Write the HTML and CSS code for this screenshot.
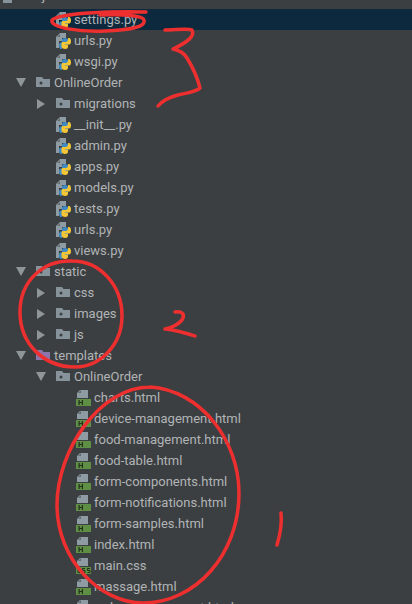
FILE: index.html
```html
<!DOCTYPE html>
<html lang="en">
<head>
<meta charset="utf-8">
<title>Project</title>
<link rel="stylesheet" href="styles.css">
</head>
<body>
<svg class="defs" width="0" height="0" aria-hidden="true">
  <symbol id="py" viewBox="0 0 16 16">
    <path fill="#8f9ba3" d="M4 0h6v5H6v3H3v7H0V4z"/>
    <path fill="#3c3f41" d="M4 1v3H1.200z" opacity=".55"/>
    <path fill="#3f8ac2" d="M9 5C6.500 5 6 6 6 7.500V9h3v.6H4.800C3.500 9.600 3 11 3 12.500S3.500 16 5 16h1v-1.800C6 13 7 12 8 12h3c1 0 1.500-.7 1.500-1.500v-3C12.500 6 11 5 9 5z"/>
    <path fill="#f4c534" transform="rotate(180 9 10.500)" d="M9 5C6.500 5 6 6 6 7.500V9h3v.6H4.800C3.500 9.600 3 11 3 12.500S3.500 16 5 16h1v-1.800C6 13 7 12 8 12h3c1 0 1.500-.7 1.500-1.500v-3C12.500 6 11 5 9 5z"/>
  </symbol>
  <symbol id="folder" viewBox="0 0 16 16">
    <path fill="#87939a" d="M0 2h6l1.500 2H14v8H0z"/>
    <circle cx="5" cy="8" r="1.500" fill="#3c3f41"/>
  </symbol>
  <symbol id="folder-purple" viewBox="0 0 16 16">
    <path fill="#8a74ab" d="M0 2h6l1.500 2H14v8H0z"/>
  </symbol>
  <symbol id="html" viewBox="0 0 16 16">
    <path fill="#8f9ba3" d="M5 -1h7v9H1V3z"/>
    <path fill="#3c3f41" d="M5 0v3H2z" opacity=".55"/>
    <path fill="#5f8f45" d="M0 9h15v7H0z"/>
    <path fill="#22301c" d="M2.500 10h1.200v2h2.100v-2H7v5H5.800v-2H3.700v2H2.500z"/>
  </symbol>
  <symbol id="css" viewBox="0 0 16 16">
    <path fill="#8f9ba3" d="M5 -1h7v9H1V3z"/>
    <path fill="#3c3f41" d="M5 0v3H2z" opacity=".55"/>
    <path fill="#5f8f45" d="M0 9h15v7H0z"/>
    <path fill="none" stroke="#22301c" d="M5 10.500H2v4h3M9 10.500H6.500v2H9v2H6.500M14 10.500h-2.500v2H14v2h-2.500"/>
  </symbol>
</svg>

<main class="panel">
  <header class="title"><span class="title-mark"></span><span class="title-text">Project</span></header>
  <ul class="tree">
    <li class="row selected d2"><svg class="icon"><use href="#py"/></svg><span>settings.py</span></li>
    <li class="row d2"><svg class="icon"><use href="#py"/></svg><span>urls.py</span></li>
    <li class="row d2"><svg class="icon"><use href="#py"/></svg><span>wsgi.py</span></li>
    <li class="row d1"><i class="arrow down"></i><svg class="icon"><use href="#folder"/></svg><span>OnlineOrder</span></li>
    <li class="row d2"><i class="arrow right"></i><svg class="icon"><use href="#folder"/></svg><span>migrations</span></li>
    <li class="row d2"><svg class="icon"><use href="#py"/></svg><span>__init__.py</span></li>
    <li class="row d2"><svg class="icon"><use href="#py"/></svg><span>admin.py</span></li>
    <li class="row d2"><svg class="icon"><use href="#py"/></svg><span>apps.py</span></li>
    <li class="row d2"><svg class="icon"><use href="#py"/></svg><span>models.py</span></li>
    <li class="row d2"><svg class="icon"><use href="#py"/></svg><span>tests.py</span></li>
    <li class="row d2"><svg class="icon"><use href="#py"/></svg><span>urls.py</span></li>
    <li class="row d2"><svg class="icon"><use href="#py"/></svg><span>views.py</span></li>
    <li class="row d1"><i class="arrow down"></i><svg class="icon"><use href="#folder"/></svg><span>static</span></li>
    <li class="row d2"><i class="arrow right"></i><svg class="icon"><use href="#folder"/></svg><span>css</span></li>
    <li class="row d2"><i class="arrow right"></i><svg class="icon"><use href="#folder"/></svg><span>images</span></li>
    <li class="row d2"><i class="arrow right"></i><svg class="icon"><use href="#folder"/></svg><span>js</span></li>
    <li class="row d1"><i class="arrow down"></i><svg class="icon"><use href="#folder-purple"/></svg><span>templates</span></li>
    <li class="row d2"><i class="arrow down"></i><svg class="icon"><use href="#folder"/></svg><span>OnlineOrder</span></li>
    <li class="row d3"><svg class="icon"><use href="#html"/></svg><span>charts.html</span></li>
    <li class="row d3"><svg class="icon"><use href="#html"/></svg><span>device-management.html</span></li>
    <li class="row d3"><svg class="icon"><use href="#html"/></svg><span>food-management.html</span></li>
    <li class="row d3"><svg class="icon"><use href="#html"/></svg><span>food-table.html</span></li>
    <li class="row d3"><svg class="icon"><use href="#html"/></svg><span>form-components.html</span></li>
    <li class="row d3"><svg class="icon"><use href="#html"/></svg><span>form-notifications.html</span></li>
    <li class="row d3"><svg class="icon"><use href="#html"/></svg><span>form-samples.html</span></li>
    <li class="row d3"><svg class="icon"><use href="#html"/></svg><span>index.html</span></li>
    <li class="row d3"><svg class="icon"><use href="#css"/></svg><span>main.css</span></li>
    <li class="row d3"><svg class="icon"><use href="#html"/></svg><span>massage.html</span></li>
    <li class="row d3"><svg class="icon"><use href="#html"/></svg><span>order-management.html</span></li>
  </ul>
  <svg class="marks" viewBox="0 0 412 604" aria-hidden="true">
    <path d="M146 12C110 11 60 13 52 20C50 28 80 32 105 31C130 30 146 27 144 20C143 16 125 14 100 15"/>
    <path d="M165 30C175 30 188 28 192 30C195 36 188 42 173 49C178 50 184 53 187 58C192 66 197 76 200 88C196 92 186 93 178 95C170 97 163 100 158 106"/>
    <path d="M72 261C100 261 122 285 122 316C122 345 100 367 75 367C45 367 20 345 20 312C20 282 42 260 72 261"/>
    <path d="M175 312C180 311 185 313 183 318C181 323 172 328 165 329C172 329 185 333 195 336"/>
    <path d="M150 387C200 390 239 440 239 493C239 555 195 603 143 603C100 603 57 560 57 505C57 450 100 387 150 387"/>
    <path d="M281 513C282 522 280 535 277 545"/>
  </svg>
</main>
</body>
</html>
```
FILE: styles.css
```css
html, body {
  margin: 0;
  padding: 0;
  height: 100%;
  background: #3c3f41;
  overflow: hidden;
}
.defs {
  position: absolute;
}
.panel {
  position: relative;
  width: 412px;
  height: 604px;
  overflow: hidden;
  background: #3c3f41;
  font-family: Roboto, "Noto Sans", sans-serif;
  font-size: 13px;
  color: #b0b4b6;
}
.title {
  height: 9px;
  background: #3c3f41;
  display: flex;
  align-items: flex-end;
  gap: 10px;
  padding-left: 3px;
  overflow: hidden;
}
.title-mark {
  width: 9px;
  height: 3px;
  margin-bottom: 6px;
  background: #87939a;
}
.title-text {
  line-height: 18px;
  height: 18px;
  margin-bottom: 4px;
}
.tree {
  list-style: none;
  margin: 0;
  padding: 0;
}
.row {
  height: 21px;
  display: flex;
  align-items: center;
  position: relative;
  white-space: nowrap;
}
.row span {
  line-height: 21px;
}
.selected {
  background: #0d293e;
}
.icon {
  width: 16px;
  height: 16px;
  margin-right: 2px;
  flex: none;
}
.d1 { padding-left: 36px; }
.d2 { padding-left: 56px; }
.d3 { padding-left: 76px; }
.arrow {
  position: absolute;
  width: 0;
  height: 0;
  border-style: solid;
  border-color: transparent;
}
.arrow.down {
  margin-left: -20px;
  border-width: 9px 5px 0;
  border-top-color: #8f9699;
}
.arrow.right {
  margin-left: -19px;
  border-width: 5px 0 5px 8px;
  border-left-color: #8f9699;
}
.marks {
  position: absolute;
  left: 0;
  top: 0;
  width: 412px;
  height: 604px;
  pointer-events: none;
}
.marks path {
  fill: none;
  stroke: #ee2f2f;
  stroke-width: 3.5;
  stroke-linecap: round;
  stroke-linejoin: round;
}
```
